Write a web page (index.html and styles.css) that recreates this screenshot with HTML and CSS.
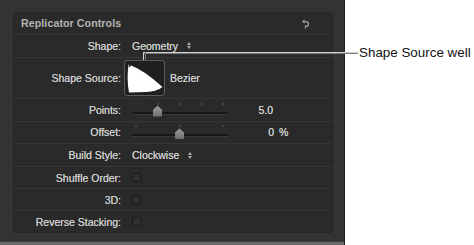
FILE: index.html
```html
<!DOCTYPE html>
<html>
<head>
<meta charset="utf-8">
<link rel="stylesheet" href="styles.css">
</head>
<body>
<div class="page">
  <div class="inspector">
    <div class="group">
      <div class="title-row">
        <span class="title">Replicator Controls</span>
        <svg class="undo" width="9" height="10" viewBox="0 0 9 10">
          <path d="M3.2 2.6 H5 A2.4 2.4 0 0 1 5 7.4 H4.2" fill="none" stroke="#9a9a9a" stroke-width="1.4"/>
          <path d="M0.8 2.6 L3.6 0.4 L3.6 4.8 Z" fill="#9a9a9a"/>
          <path d="M4.4 6.6 V9.4" stroke="#9a9a9a" stroke-width="1.2"/>
        </svg>
      </div>
      <div class="row">
        <span class="label">Shape:</span>
        <div class="value"><span>Geometry</span><span class="updown"><i class="up"></i><i class="down"></i></span></div>
      </div>
      <div class="row well-row">
        <span class="label">Shape Source:</span>
        <div class="value">
          <div class="well">
            <svg width="40" height="35" viewBox="0 0 40 35">
              <path d="M4.5 4.5 L6.5 5.2 Q20 10 38.5 27 Q33 31.5 22 32 L5 32.5 Q2.5 20 4.5 4.5 Z" fill="#fff"/>
              <path d="M4.6 4.6 L7.2 5.6 L5.4 7.4 Z" fill="#222"/>
            </svg>
          </div>
          <span class="well-name">Bezier</span>
        </div>
      </div>
      <div class="row">
        <span class="label">Points:</span>
        <div class="value">
          <div class="slider">
            <i class="tick" style="left:3px"></i><i class="tick" style="left:25px"></i><i class="tick" style="left:47px"></i><i class="tick" style="left:69px"></i><i class="tick" style="left:90px"></i>
            <div class="track"></div>
            <i class="thumb" style="left:21px"></i>
          </div>
          <span class="num">5.0</span>
        </div>
      </div>
      <div class="row">
        <span class="label">Offset:</span>
        <div class="value">
          <div class="slider">
            <i class="tick" style="left:3px"></i><i class="tick" style="left:47px"></i><i class="tick" style="left:90px"></i>
            <div class="track"></div>
            <i class="thumb" style="left:43px"></i>
          </div>
          <span class="num short">0</span><span class="unit">%</span>
        </div>
      </div>
      <div class="row">
        <span class="label">Build Style:</span>
        <div class="value"><span>Clockwise</span><span class="updown"><i class="up"></i><i class="down"></i></span></div>
      </div>
      <div class="row small">
        <span class="label">Shuffle Order:</span>
        <div class="value"><span class="check"></span></div>
      </div>
      <div class="row small">
        <span class="label">3D:</span>
        <div class="value"><span class="check"></span></div>
      </div>
      <div class="row small">
        <span class="label">Reverse Stacking:</span>
        <div class="value"><span class="check"></span></div>
      </div>
    </div>
    <div class="bottom-strip"></div>
  </div>
  <div class="callout">
    <div class="callout-line"></div>
    <div class="callout-drop"></div>
    <span class="callout-text">Shape Source well</span>
  </div>
</div>
</body>
</html>
```
FILE: styles.css
```css
* { box-sizing: border-box; }
html, body { margin: 0; padding: 0; background: #fff; }
body { width: 474px; height: 245px; overflow: hidden; font-family: "Liberation Sans", Arial, sans-serif; }

.page { position: relative; display: flex; width: 474px; height: 245px; }

.inspector {
  width: 345px;
  height: 245px;
  background: #333333;
  border-right: 1px solid #222;
  padding: 12px 11px 0 13px;
  display: flex;
  flex-direction: column;
  position: relative;
}
.bottom-strip {
  position: absolute;
  left: 0; right: 0; bottom: 0;
  height: 4px;
  background: #6a6a6a;
  border-top: 1px solid #3e3e3e;
}

.group {
  background: #2a2a2a;
  border: 1px solid #252525;
  border-radius: 3px;
  height: 221px;
  display: flex;
  flex-direction: column;
}

.title-row {
  height: 21px;
  display: flex;
  align-items: center;
  justify-content: space-between;
  padding: 0 22px 0 7px;
}
.title { font-weight: bold; font-size: 10.6px; color: #b4b4b4; letter-spacing: 0.1px; }
.undo { display: block; margin-top: 1px; }

.row {
  display: grid;
  grid-template-columns: 107px 1fr;
  column-gap: 11px;
  align-items: center;
  height: 23px;
  border-top: 1px solid #363636;
  color: #c6c6c6;
  font-size: 10.5px;
}
.row.small { height: 22px; }
.row.well-row { height: 41px; }
.label { text-align: right; color: #cbcbcb; text-shadow: 0 0 0.5px #cbcbcb; }
.value { display: flex; align-items: center; color: #cdcdcd; text-shadow: 0 0 0.5px #cdcdcd; }

.updown { display: inline-flex; flex-direction: column; gap: 1px; margin-left: 9px; }
.up, .down { display: block; width: 0; height: 0; border-left: 2.5px solid transparent; border-right: 2.5px solid transparent; }
.up { border-bottom: 3px solid #a8a8a8; }
.down { border-top: 3px solid #a8a8a8; }

.well {
  width: 41px; height: 36px;
  border: 1px solid #5c5c5c;
  border-radius: 3px;
  background: #1f1f1f;
  overflow: hidden;
  margin-left: -8px;
}
.well svg { display: block; margin: -1px 0 0 -1px; }
.well-name { margin-left: 5px; margin-top: 1px; }

.slider { position: relative; width: 96px; height: 20px; }
.tick { position: absolute; top: 3px; width: 2px; height: 2px; border-radius: 1px; background: #505050; }
.track {
  position: absolute; left: 0; right: 0; top: 12px;
  height: 3px;
  background: #161616;
  border-radius: 2px;
  border-bottom: 1px solid #3b3b3b;
}
.thumb {
  position: absolute; top: 6px;
  width: 9px; height: 11px;
  background: linear-gradient(#9c9c9c, #6e6e6e);
  clip-path: polygon(50% 0, 100% 38%, 100% 100%, 0 100%, 0 38%);
  border-radius: 1px;
}
.num { width: 45px; text-align: right; color: #cfcfcf; }
.num.short { width: 46px; }
.unit { margin-left: 5px; color: #cfcfcf; }

.check {
  width: 9px; height: 9px;
  border: 1px solid #191919;
  border-radius: 2px;
  background: #303030;
  text-shadow: none;
}

.callout { position: absolute; left: 0; top: 0; width: 474px; height: 245px; pointer-events: none; }
.callout-line {
  position: absolute; left: 143px; top: 52px;
  width: 215px; height: 2px;
  border-top: 1px solid #cfcfcf;
  border-bottom: 1px solid #7a7a7a;
}
.callout-drop {
  position: absolute; left: 143px; top: 52px;
  width: 3px; height: 8px;
  border-left: 1px solid #cfcfcf;
  border-right: 1px solid #7a7a7a;
}
.callout-text {
  position: absolute; left: 359px; top: 45px;
  font-size: 13.4px; color: #111;
  font-family: "Liberation Sans", Arial, sans-serif;
}
```
